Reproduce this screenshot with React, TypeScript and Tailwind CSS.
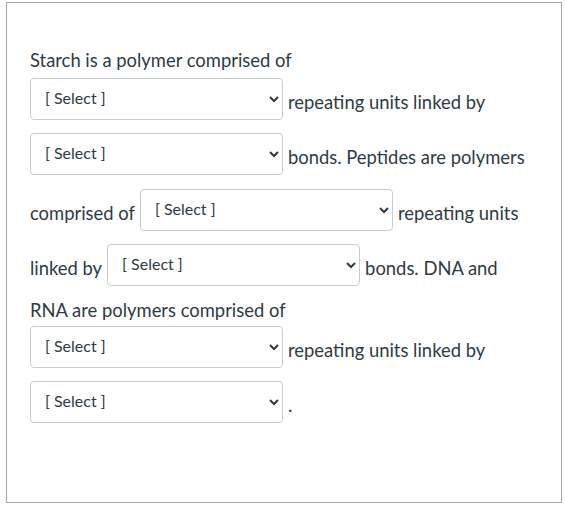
import React from 'react';

const Dropdown: React.FC = () => (
  <select
    defaultValue=""
    className="h-[42px] w-[253px] shrink-0 rounded-[4px] border border-[#c7cdd1] bg-white pb-[3px] pl-[10px] pr-[2px] text-[16px] text-[#2d3b45]"
  >
    <option value="">[ Select ]</option>
  </select>
);

const Side: React.FC<{ children: React.ReactNode; before?: boolean }> = ({ children, before }) => (
  <span className={`mt-[14px] whitespace-nowrap leading-[20px] ${before ? 'mr-[5px]' : 'ml-[5px]'}`}>
    {children}
  </span>
);

export default function App() {
  return (
    <div className="h-[515px] w-[565px] bg-white font-['Lato',sans-serif] text-[18.4px] text-[#2d3b45]">
      <div className="ml-[6px] h-[501px] w-[556px] border-x border-b border-[#a8a8a8]">
        <div className="mt-[2px] border-t border-[#a8a8a8] pl-[23px]">
          <p className="mt-[47px] leading-[20px]">Starch is a polymer comprised of</p>

          <div className="mt-[8px] flex items-start">
            <Dropdown />
            <Side>repeating units linked by</Side>
          </div>
          <div className="mt-[13px] flex items-start">
            <Dropdown />
            <Side>bonds. Peptides are polymers</Side>
          </div>
          <div className="mt-[14px] flex items-start">
            <Side before>comprised of</Side>
            <Dropdown />
            <Side>repeating units</Side>
          </div>
          <div className="mt-[13px] flex items-start">
            <Side before>linked by</Side>
            <Dropdown />
            <Side>bonds. DNA and</Side>
          </div>

          <p className="mt-[14px] leading-[20px]">RNA are polymers comprised of</p>

          <div className="mt-[6px] flex items-start">
            <Dropdown />
            <Side>repeating units linked by</Side>
          </div>
          <div className="mt-[13px] flex items-start">
            <Dropdown />
            <Side>.</Side>
          </div>
        </div>
      </div>
    </div>
  );
}
